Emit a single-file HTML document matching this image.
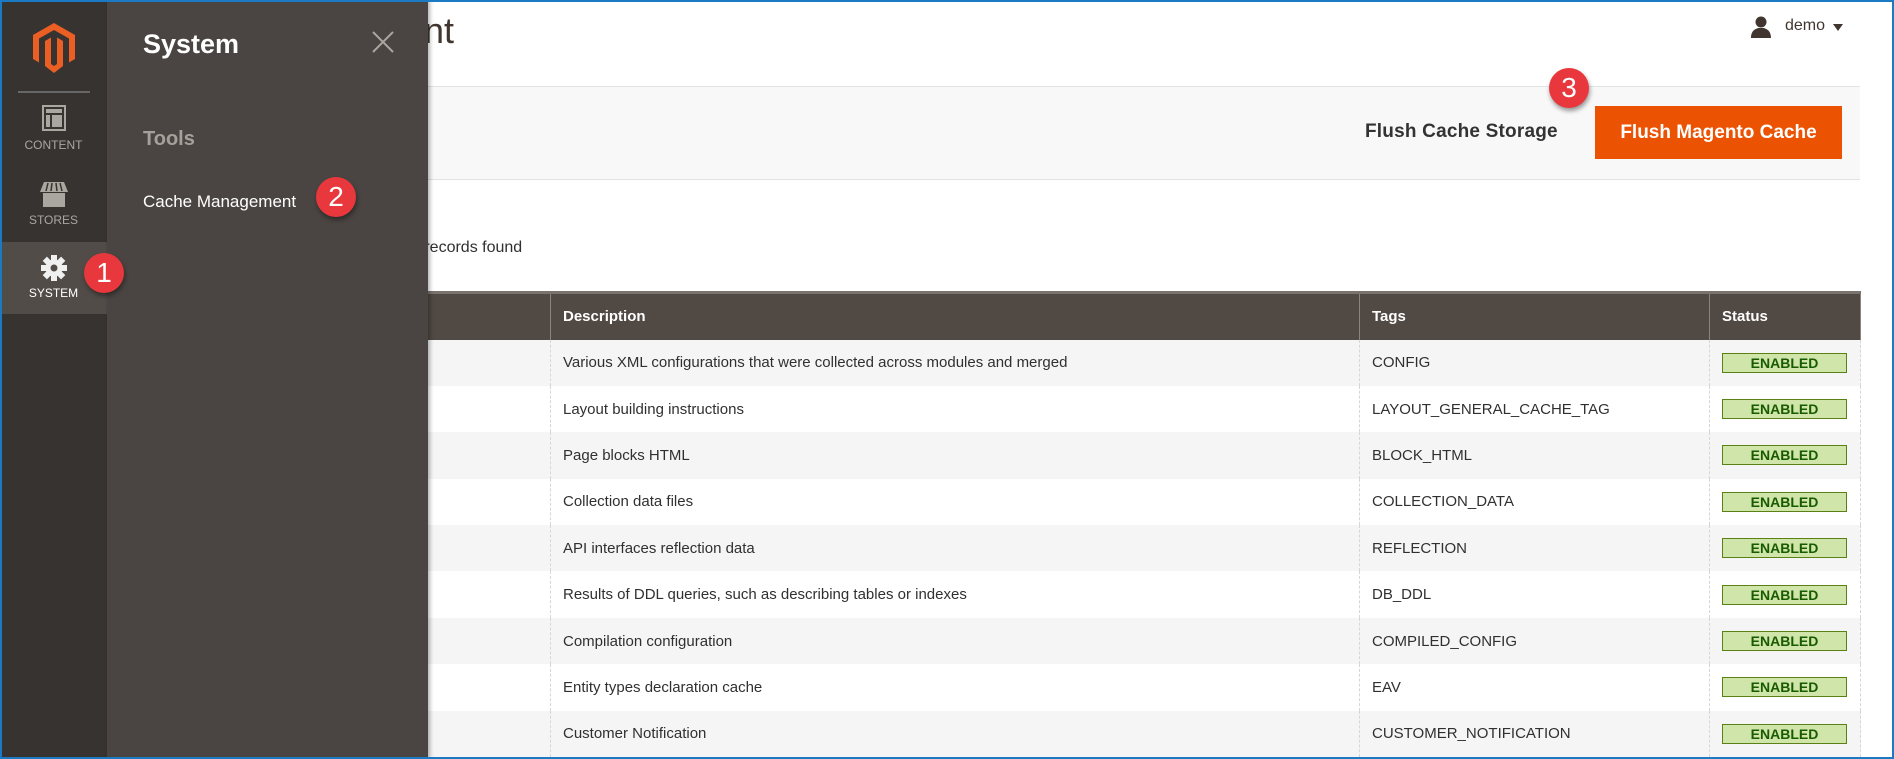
<!DOCTYPE html>
<html><head><meta charset="utf-8"><style>
*{margin:0;padding:0;box-sizing:border-box}
body{width:1894px;height:759px;overflow:hidden;background:#fff;font-family:"Liberation Sans",sans-serif;position:relative;color:#303030}
.abs{position:absolute}
.frame{position:absolute;left:0;top:0;width:1894px;height:759px;border:2px solid #1a7ac4;z-index:50;pointer-events:none}
.bar{left:0;top:0;width:107px;height:759px;background:#373330}
.panel{left:107px;top:0;width:321px;height:759px;background:#4a4542;box-shadow:2px 0 4px rgba(0,0,0,.3)}
.navlbl{position:absolute;width:107px;text-align:center;font-size:12px;color:#aaa6a0}
.badge{position:absolute;width:40px;height:40px;border-radius:50%;background:#e8383d;color:#fff;font-size:28px;text-align:center;line-height:40px;box-shadow:1px 3px 5px rgba(0,0,0,.4);z-index:40}
table{position:absolute;left:300px;top:291px;border-collapse:collapse;font-size:15px}
th{background:#514943;color:#fff;text-align:left;font-weight:bold;height:47px;padding:0 12px;border-left:1px solid #8a837f;border-right:1px solid #8a837f;border-top:3px solid #7a726d}
td{height:46.4px;padding:0 12px;border-left:1px dashed #d6d6d6;border-right:1px dashed #d6d6d6;color:#303030}
tr:nth-child(even) td{background:#f5f5f5}
.en{display:block;width:125px;height:20px;background:#d0e5a9;border:1px solid #5b8116;color:#185b00;font-weight:bold;text-align:center;line-height:18px;font-size:14px}
</style></head><body>
<div class="frame"></div>
<div class="abs" style="left:0;top:10px;width:454px;text-align:right;font-size:36px;color:#41362f;font-weight:300">Cache Management</div>
<div class="abs" style="left:1750px;top:16px;width:20px;height:22px">
<svg width="22" height="22" viewBox="0 0 22 22"><circle cx="11" cy="6" r="5.5" fill="#41362f"/><path d="M1 22 C1 14 6 13 8 12 L14 12 C16 13 21 14 21 22Z" fill="#41362f"/></svg></div>
<div class="abs" style="left:1785px;top:17px;font-size:16px;color:#41362f">demo</div>
<div class="abs" style="left:1833px;top:24px;width:0;height:0;border-left:5px solid transparent;border-right:5px solid transparent;border-top:7px solid #41362f"></div>
<div class="abs" style="left:300px;top:86px;width:1560px;height:94px;background:#f8f8f8;border-top:1px solid #e3e3e3;border-bottom:1px solid #e3e3e3"></div>
<div class="abs" style="left:1365px;top:121px;font-size:19px;color:#303030;font-weight:bold;letter-spacing:.2px;color:#333">Flush Cache Storage</div>
<div class="abs" style="left:1595px;top:106px;width:247px;height:53px;background:#eb5202;color:#fff;font-size:19px;font-weight:bold;text-align:center;line-height:53px">Flush Magento Cache</div>
<div class="badge" style="left:1549px;top:68px">3</div>
<div class="abs" style="left:411px;top:239px;font-size:16px">5 records found</div>
<table>
<tr><th style="width:250px"></th><th style="width:809px">Description</th><th style="width:350px">Tags</th><th style="width:151px">Status</th></tr>
<tr><td></td><td>Various XML configurations that were collected across modules and merged</td><td>CONFIG</td><td><span class="en">ENABLED</span></td></tr>
<tr><td></td><td>Layout building instructions</td><td>LAYOUT_GENERAL_CACHE_TAG</td><td><span class="en">ENABLED</span></td></tr>
<tr><td></td><td>Page blocks HTML</td><td>BLOCK_HTML</td><td><span class="en">ENABLED</span></td></tr>
<tr><td></td><td>Collection data files</td><td>COLLECTION_DATA</td><td><span class="en">ENABLED</span></td></tr>
<tr><td></td><td>API interfaces reflection data</td><td>REFLECTION</td><td><span class="en">ENABLED</span></td></tr>
<tr><td></td><td>Results of DDL queries, such as describing tables or indexes</td><td>DB_DDL</td><td><span class="en">ENABLED</span></td></tr>
<tr><td></td><td>Compilation configuration</td><td>COMPILED_CONFIG</td><td><span class="en">ENABLED</span></td></tr>
<tr><td></td><td>Entity types declaration cache</td><td>EAV</td><td><span class="en">ENABLED</span></td></tr>
<tr><td></td><td>Customer Notification</td><td>CUSTOMER_NOTIFICATION</td><td><span class="en">ENABLED</span></td></tr>
</table>
<div class="abs bar">
<svg class="abs" style="left:33px;top:23px" width="42" height="50" viewBox="0 0 42 50"><path d="M21 0 L42 12 L42 36 L36 39.5 L36 15.5 L21 7 L6 15.5 L6 39.5 L0 36 L0 12Z M12 18 L18 14.5 L18 41 L21 43 L24 41 L24 14.5 L30 18 L30 43 L21 50 L12 43Z" fill="#eb5f24"/></svg>
<div class="abs" style="left:18px;top:91px;width:72px;height:2px;background:#666"></div>
<svg class="abs" style="left:42px;top:105px" width="24" height="26" viewBox="0 0 24 26"><rect x="1" y="1" width="22" height="24" fill="none" stroke="#aaa6a0" stroke-width="2"/><rect x="4" y="4" width="16" height="4" fill="#aaa6a0"/><rect x="4" y="10" width="4" height="12" fill="#aaa6a0"/><rect x="10" y="10" width="10" height="12" fill="#aaa6a0"/></svg>
<div class="navlbl" style="top:138px">CONTENT</div>
<svg class="abs" style="left:40px;top:182px" width="28" height="25" viewBox="0 0 28 25"><path d="M4 0 L24 0 L28 10 L0 10Z" fill="#aaa6a0"/><path d="M8 1 L6 9 M12 1 L11 9 M16 1 L17 9 M20 1 L22 9" stroke="#373330" stroke-width="1.5"/><rect x="3" y="11" width="22" height="14" fill="#aaa6a0"/></svg>
<div class="navlbl" style="top:213px">STORES</div>
<div class="abs" style="left:0;top:242px;width:107px;height:72px;background:#524c48"></div>
<svg class="abs" style="left:41px;top:255px" width="26" height="26" viewBox="0 0 26 26"><g fill="#f0f0f0"><circle cx="13" cy="13" r="8.5"/><g transform="translate(13 13)"><rect x="-3" y="-13" width="6" height="26"/><rect x="-3" y="-13" width="6" height="26" transform="rotate(45)"/><rect x="-3" y="-13" width="6" height="26" transform="rotate(90)"/><rect x="-3" y="-13" width="6" height="26" transform="rotate(135)"/></g></g><circle cx="13" cy="13" r="3.5" fill="#524c48"/></svg>
<div class="navlbl" style="top:286px;color:#fff">SYSTEM</div>
</div>
<div class="badge" style="left:84px;top:253px">1</div>
<div class="abs panel">
<div class="abs" style="left:36px;top:29px;font-size:27px;color:#fff;font-weight:bold">System</div>
<svg class="abs" style="left:265px;top:31px" width="22" height="22" viewBox="0 0 22 22"><path d="M1 1 L21 21 M21 1 L1 21" stroke="#aaa6a0" stroke-width="2"/></svg>
<div class="abs" style="left:36px;top:128px;font-size:20px;color:#a6a09a;font-weight:bold">Tools</div>
<div class="abs" style="left:36px;top:192px;font-size:17px;color:#fff">Cache Management</div>
</div>
<div class="badge" style="left:316px;top:177px">2</div>
</body></html>
